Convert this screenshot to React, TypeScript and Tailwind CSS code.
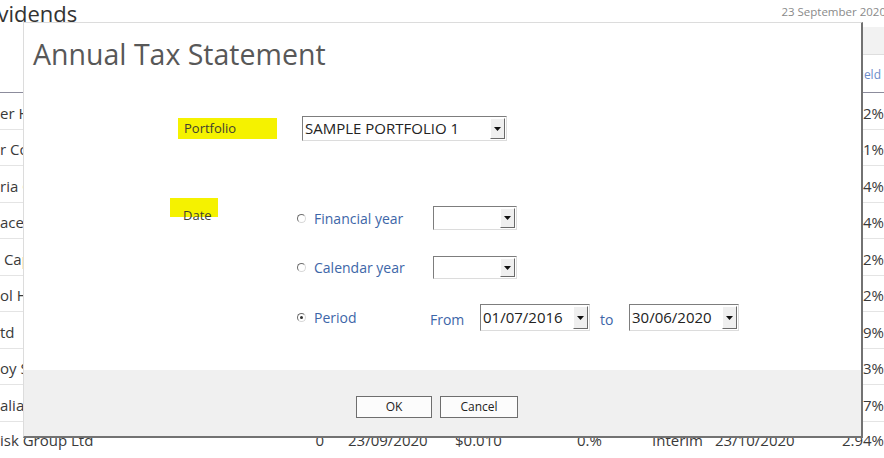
import React from "react";

const FONT = { fontFamily: '"Open Sans", "Noto Sans", Arial, sans-serif' };

const rows = [
  { name: "er Holdings Ltd", yld: "3.12%" },
  { name: "r Corporation", yld: "2.41%" },
  { name: "ria Group", yld: "5.14%" },
  { name: "ace Ltd", yld: "4.54%" },
  { name: " Capital", yld: "3.22%" },
  { name: "ol Holdings", yld: "2.52%" },
  { name: "td", yld: "1.49%" },
  { name: "oy Services", yld: "6.03%" },
  { name: "alia Ltd", yld: "3.17%" },
];

function Arrow() {
  return (
    <svg width="7" height="4" viewBox="0 0 7 4">
      <path d="M0 0 H7 L3.5 4 Z" fill="#111" />
    </svg>
  );
}

function Select({ w, h, value }: { w: string; h: string; value?: string }) {
  return (
    <div
      className={`${w} ${h} flex items-stretch bg-white border border-t-[#7d7d7d] border-l-[#7d7d7d] border-r-[#dcdcdc] border-b-[#dcdcdc]`}
    >
      <div className="flex-1 flex items-center pl-[2px] text-[15px] text-[#222] whitespace-nowrap overflow-hidden">
        {value}
      </div>
      <div className="w-[15px] m-[1px] flex items-center justify-center bg-[#efefef] border border-t-white border-l-white border-r-[#6a6a6a] border-b-[#6a6a6a]">
        <Arrow />
      </div>
    </div>
  );
}

function Radio({ checked }: { checked?: boolean }) {
  return (
    <span className="w-[9px] h-[9px] rounded-full border border-t-[#6f6f6f] border-l-[#6f6f6f] border-r-[#d8d8d8] border-b-[#d8d8d8] bg-white flex items-center justify-center shrink-0">
      {checked && <span className="w-[3px] h-[3px] rounded-full bg-[#333]" />}
    </span>
  );
}

export default function App() {
  return (
    <div style={FONT} className="relative w-[884px] h-[458px] overflow-hidden bg-white">
      {/* page behind */}
      <div className="flex flex-col">
        <div className="h-[27px] flex justify-between items-start">
          <span className="-ml-[24px] text-[22px] leading-[26px] text-[#333] whitespace-nowrap">Dividends</span>
          <span className="mt-[3px] -mr-[2px] text-[11.5px] text-[#8a8a8a] whitespace-nowrap">
            23 September 2020
          </span>
        </div>
        <div className="h-[28px] flex justify-end">
          <div className="w-[160px] bg-[#f2f2f2] border-b border-[#dedede]" />
        </div>
        <div className="h-[38px] flex items-center justify-end pr-[3px] pt-[3px] border-b border-[#8c8c9c] text-[12px] text-[#6a8cca]">
          Yield
        </div>
        {rows.map((r, i) => (
          <div
            key={i}
            className="h-[36.5px] flex items-center pt-[4px] border-b border-[#e4e4e4] text-[15px] text-[#3a3a3a]"
          >
            <span className="w-[300px] whitespace-pre overflow-hidden">{r.name}</span>
            <span className="flex-1 text-right">{r.yld}</span>
          </div>
        ))}
        <div className="h-[36.5px] flex items-center text-[15px] text-[#3a3a3a] whitespace-nowrap">
          <span className="w-[300px]">isk Group Ltd</span>
          <span className="w-[24px] text-right">0</span>
          <span className="w-[130px] pl-[24px]">23/09/2020</span>
          <span className="w-[100px] pl-[1px]">$0.010</span>
          <span className="w-[86px] pl-[23px]">0.%</span>
          <span className="w-[72px] pl-[12px]">Interim</span>
          <span className="w-[108px] pl-[3px]">23/10/2020</span>
          <span className="flex-1 text-right">2.94%</span>
        </div>
      </div>

      {/* dialog */}
      <div className="absolute left-[23px] top-[22px] w-[840px] h-[416px] flex flex-col bg-white border-t border-l border-[#dcdcdc] border-r-2 border-r-[#727272] border-b-2 border-b-[#727272]">
        <div className="flex-1 flex flex-col">
          <div className="mt-[12px] pl-[9px] text-[28.5px] leading-[38px] text-[#585858]">
            Annual Tax Statement
          </div>

          <div className="mt-[43px] h-[25px] flex items-center">
            <div className="ml-[154px] w-[99px] h-[21px] bg-[#f5f200] flex items-center pl-[6px] text-[13px] text-[#3f3f30]">
              Portfolio
            </div>
            <div className="ml-[25px]">
              <Select w="w-[205px]" h="h-[25px]" value="SAMPLE PORTFOLIO 1" />
            </div>
          </div>

          <div className="mt-[65px] flex">
            <div className="w-[273px] shrink-0">
              <div className="ml-[159px] -mt-[4px] relative w-fit">
                <span className="absolute left-[-13px] top-[-4px] w-[48px] h-[19px] bg-[#f5f200]" />
                <span className="relative text-[13px] leading-[18px] text-[#3f3f30]">Date</span>
              </div>
            </div>
            <div className="flex flex-col">
              <div className="h-[24px] flex items-center">
                <div className="w-[136px] flex items-center gap-[8px]">
                  <Radio />
                  <span className="text-[14px] text-[#3d66a8]">Financial year</span>
                </div>
                <Select w="w-[84px]" h="h-[24px]" />
              </div>
              <div className="mt-[26px] h-[23px] flex items-center">
                <div className="w-[136px] flex items-center gap-[8px]">
                  <Radio />
                  <span className="text-[14px] text-[#3d66a8]">Calendar year</span>
                </div>
                <Select w="w-[84px]" h="h-[23px]" />
              </div>
              <div className="mt-[25px] h-[27px] flex items-center">
                <div className="w-[133px] flex items-center gap-[8px]">
                  <Radio checked />
                  <span className="text-[14px] text-[#3d66a8]">Period</span>
                </div>
                <span className="w-[50px] text-[14px] text-[#3d66a8] pt-[3px]">From</span>
                <Select w="w-[110px]" h="h-[27px]" value="01/07/2016" />
                <span className="ml-[10px] w-[29px] text-[14px] text-[#3d66a8] pt-[3px]">to</span>
                <Select w="w-[110px]" h="h-[27px]" value="30/06/2020" />
              </div>
            </div>
          </div>
        </div>

        <div className="h-[66px] bg-[#f0f0f0] pt-[26px] pl-[332px] flex items-start gap-[8px]">
          <button className="w-[76px] h-[22px] bg-[#fcfcfc] border border-[#6e6e6e] text-[12px] text-[#222]">
            OK
          </button>
          <button className="w-[78px] h-[22px] bg-[#fcfcfc] border border-[#6e6e6e] text-[12px] text-[#222]">
            Cancel
          </button>
        </div>
      </div>
    </div>
  );
}
